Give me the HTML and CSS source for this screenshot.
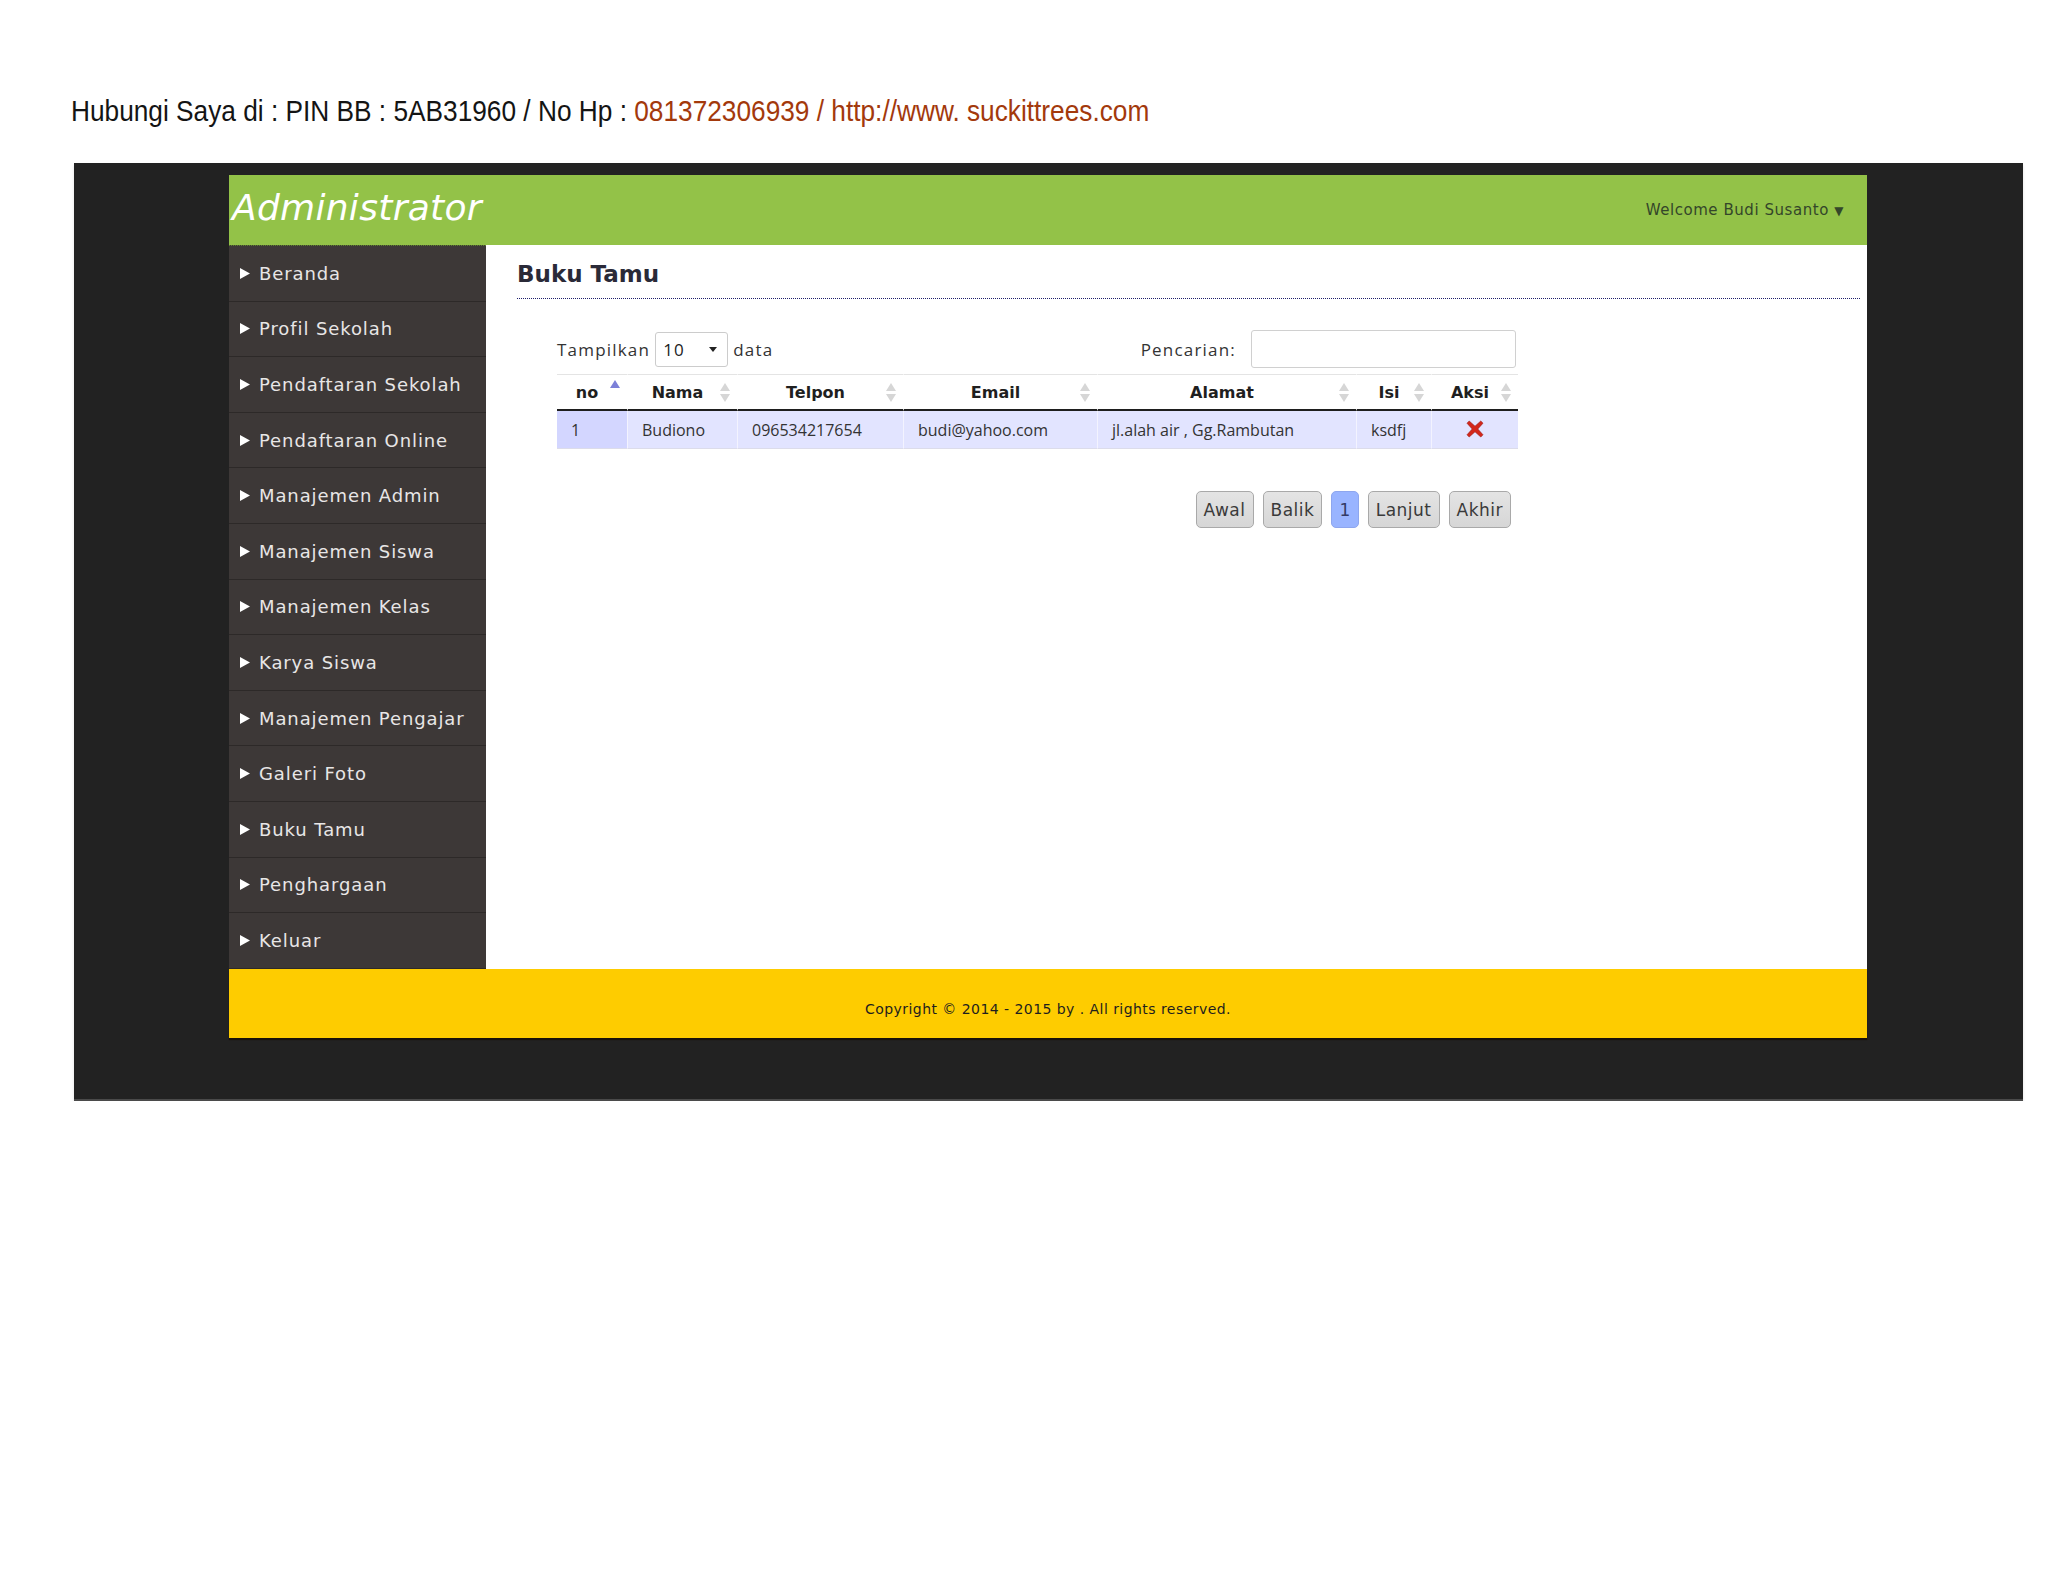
FILE: index.html
```html
<!DOCTYPE html>
<html>
<head>
<meta charset="utf-8">
<title>Administrator - Buku Tamu</title>
<link rel="stylesheet" href="styles.css">
</head>
<body>
<div class="contact"><span class="contact-text">Hubungi Saya di : PIN BB : 5AB31960 / No Hp : <span class="hl">081372306939 / http://www. suckittrees.com</span></span></div>
<div class="stage">
  <div class="app">
    <header class="topbar">
      <div class="brand">Administrator</div>
      <div class="welcome">Welcome Budi Susanto <span class="caret">▼</span></div>
    </header>
    <div class="main">
      <nav class="sidebar">
        <a class="nav-item"><svg class="tri" viewBox="0 0 10 11"><polygon points="0,0 10,5.5 0,11"/></svg>Beranda</a>
        <a class="nav-item"><svg class="tri" viewBox="0 0 10 11"><polygon points="0,0 10,5.5 0,11"/></svg>Profil Sekolah</a>
        <a class="nav-item"><svg class="tri" viewBox="0 0 10 11"><polygon points="0,0 10,5.5 0,11"/></svg>Pendaftaran Sekolah</a>
        <a class="nav-item"><svg class="tri" viewBox="0 0 10 11"><polygon points="0,0 10,5.5 0,11"/></svg>Pendaftaran Online</a>
        <a class="nav-item"><svg class="tri" viewBox="0 0 10 11"><polygon points="0,0 10,5.5 0,11"/></svg>Manajemen Admin</a>
        <a class="nav-item"><svg class="tri" viewBox="0 0 10 11"><polygon points="0,0 10,5.5 0,11"/></svg>Manajemen Siswa</a>
        <a class="nav-item"><svg class="tri" viewBox="0 0 10 11"><polygon points="0,0 10,5.5 0,11"/></svg>Manajemen Kelas</a>
        <a class="nav-item"><svg class="tri" viewBox="0 0 10 11"><polygon points="0,0 10,5.5 0,11"/></svg>Karya Siswa</a>
        <a class="nav-item"><svg class="tri" viewBox="0 0 10 11"><polygon points="0,0 10,5.5 0,11"/></svg>Manajemen Pengajar</a>
        <a class="nav-item"><svg class="tri" viewBox="0 0 10 11"><polygon points="0,0 10,5.5 0,11"/></svg>Galeri Foto</a>
        <a class="nav-item"><svg class="tri" viewBox="0 0 10 11"><polygon points="0,0 10,5.5 0,11"/></svg>Buku Tamu</a>
        <a class="nav-item"><svg class="tri" viewBox="0 0 10 11"><polygon points="0,0 10,5.5 0,11"/></svg>Penghargaan</a>
        <a class="nav-item"><svg class="tri" viewBox="0 0 10 11"><polygon points="0,0 10,5.5 0,11"/></svg>Keluar</a>
      </nav>
      <section class="content">
        <h1 class="page-title">Buku Tamu</h1>
        <div class="dt">
          <div class="dt-toolbar">
            <label class="dt-length">Tampilkan
              <span class="select"><span>10</span><svg class="sel-caret" viewBox="0 0 8 5"><polygon points="0,0 8,0 4,5"/></svg></span>
              data</label>
            <label class="dt-search">Pencarian: <span class="search-box"></span></label>
          </div>
          <table class="grid">
            <colgroup>
              <col class="c-no">
              <col class="c-nama">
              <col class="c-telp">
              <col class="c-email">
              <col class="c-alamat">
              <col class="c-isi">
              <col class="c-aksi">
            </colgroup>
            <thead>
              <tr>
                <th>no<svg class="sort sort-asc" viewBox="0 0 10 20"><polygon class="asc" points="0,8 5,0 10,8"/></svg></th>
                <th>Nama<svg class="sort" viewBox="0 0 10 20"><polygon points="0,8 5,0 10,8"/><polygon points="0,11 10,11 5,19"/></svg></th>
                <th>Telpon<svg class="sort" viewBox="0 0 10 20"><polygon points="0,8 5,0 10,8"/><polygon points="0,11 10,11 5,19"/></svg></th>
                <th>Email<svg class="sort" viewBox="0 0 10 20"><polygon points="0,8 5,0 10,8"/><polygon points="0,11 10,11 5,19"/></svg></th>
                <th>Alamat<svg class="sort" viewBox="0 0 10 20"><polygon points="0,8 5,0 10,8"/><polygon points="0,11 10,11 5,19"/></svg></th>
                <th>Isi<svg class="sort" viewBox="0 0 10 20"><polygon points="0,8 5,0 10,8"/><polygon points="0,11 10,11 5,19"/></svg></th>
                <th>Aksi<svg class="sort" viewBox="0 0 10 20"><polygon points="0,8 5,0 10,8"/><polygon points="0,11 10,11 5,19"/></svg></th>
              </tr>
            </thead>
            <tbody>
              <tr>
                <td class="sorted">1</td>
                <td>Budiono</td>
                <td>096534217654</td>
                <td>budi@yahoo.com</td>
                <td>jl.alah air , Gg.Rambutan</td>
                <td>ksdfj</td>
                <td class="act"><svg class="del" viewBox="0 0 18 18"><path d="M3.2 1 L9 6.2 L14.8 1 L17 3.2 L11.8 9 L17 14.8 L14.8 17 L9 11.8 L3.2 17 L1 14.8 L6.2 9 L1 3.2 Z"/></svg></td>
              </tr>
            </tbody>
          </table>
          <div class="pager">
            <a class="pbtn">Awal</a>
            <a class="pbtn">Balik</a>
            <a class="pbtn current">1</a>
            <a class="pbtn">Lanjut</a>
            <a class="pbtn">Akhir</a>
          </div>
        </div>
      </section>
    </div>
    <footer class="footer">Copyright © 2014 - 2015 by . All rights reserved.</footer>
  </div>
</div>
</body>
</html>
```
FILE: styles.css
```css
html, body {
  margin: 0;
  padding: 0;
  background: #ffffff;
}

body {
  font-family: "DejaVu Sans", sans-serif;
}

.contact {
  padding: 91px 0 0 71px;
  height: 40px;
  font-family: "Liberation Sans", Arial, sans-serif;
  font-size: 30px;
  line-height: 40px;
  color: #141414;
  white-space: nowrap;
}

.contact-text {
  display: inline-block;
  transform: scaleX(0.875);
  transform-origin: left center;
}

.contact .hl {
  color: #a3390c;
}

.stage {
  margin: 32px 0 0 74px;
  width: 1949px;
  height: 938px;
  box-sizing: border-box;
  background: #222222;
  padding: 12px 0 0 155px;
  border-bottom: 2px solid #4a4a4a;
  box-shadow: 0 2px 3px rgba(0, 0, 0, 0.12);
}

.app {
  width: 1638px;
}

.topbar {
  height: 70px;
  background: #93c248;
  display: flex;
  align-items: center;
  justify-content: space-between;
}

.brand {
  padding: 0 0 6px 3px;
  font-family: "DejaVu Sans", sans-serif;
  font-style: italic;
  font-size: 36px;
  color: #ffffff;
  letter-spacing: 0.3px;
}

.welcome {
  padding: 0 23px 0 0;
  font-family: "DejaVu Sans", sans-serif;
  font-size: 15px;
  letter-spacing: 0.55px;
  color: #34462a;
}

.welcome .caret {
  font-size: 12px;
}

.main {
  display: flex;
  align-items: stretch;
}

.sidebar {
  width: 257px;
  flex: none;
  background: #3d3837;
  border-top: 1px dotted #5f7f30;
  display: flex;
  flex-direction: column;
}

.nav-item {
  height: 54.6px;
  box-sizing: content-box;
  border-bottom: 1px solid #2d2928;
  display: flex;
  align-items: center;
  padding-left: 11px;
  font-family: "DejaVu Sans", sans-serif;
  font-size: 18px;
  letter-spacing: 0.9px;
  color: #e8e6e6;
  white-space: nowrap;
}

.nav-item .tri {
  width: 10px;
  height: 11px;
  fill: #ffffff;
  margin-right: 9px;
  flex: none;
}

.content {
  flex: 1;
  background: #ffffff;
  padding: 0 7px 0 31px;
}

.page-title {
  margin: 0;
  padding: 12px 0 7px 0;
  line-height: 34px;
  font-family: "DejaVu Sans", sans-serif;
  font-weight: bold;
  font-size: 23px;
  color: #2a2a38;
  border-bottom: 1px dotted #1e1e6a;
}

.dt {
  margin-left: 40px;
  width: 961px;
}

.dt-toolbar {
  margin-top: 31px;
  height: 38px;
  display: flex;
  align-items: center;
  justify-content: space-between;
  font-family: "Open Sans", sans-serif;
  font-size: 17px;
  letter-spacing: 1.2px;
  color: #333333;
}

.dt-length {
  display: flex;
  align-items: center;
  gap: 5px;
}

.select {
  width: 73px;
  height: 35px;
  box-sizing: border-box;
  border: 1px solid #cccccc;
  border-radius: 3px;
  background: #ffffff;
  display: flex;
  align-items: center;
  justify-content: space-between;
  padding: 0 10px 0 7px;
  color: #222222;
}

.sel-caret {
  width: 8px;
  height: 5px;
  fill: #222222;
}

.dt-search {
  display: flex;
  align-items: center;
  gap: 15px;
  margin-right: 2px;
}

.search-box {
  width: 265px;
  height: 38px;
  box-sizing: border-box;
  border: 1px solid #d0d0d0;
  border-radius: 3px;
  background: #ffffff;
}

.grid {
  margin-top: 6px;
  width: 961px;
  border-collapse: separate;
  border-spacing: 0;
  table-layout: fixed;
}

.c-no { width: 70px; }
.c-nama { width: 110px; }
.c-telp { width: 166px; }
.c-email { width: 194px; }
.c-alamat { width: 259px; }
.c-isi { width: 75px; }
.c-aksi { width: 87px; }

.grid th {
  position: relative;
  height: 34px;
  padding: 0 25px 0 15px;
  border-top: 1px solid #e4e4e4;
  border-bottom: 2px solid #1e1e1e;
  border-left: 1px solid #ffffff;
  background: #ffffff;
  font-family: "DejaVu Sans", sans-serif;
  font-weight: bold;
  font-size: 16px;
  color: #1f1f1f;
  text-align: center;
  white-space: nowrap;
}

.grid th:first-child {
  border-left: none;
}

.grid th .sort {
  position: absolute;
  right: 7px;
  top: 8px;
  width: 10px;
  height: 20px;
  fill: #d6d6d6;
}

.grid th .sort .asc {
  fill: #7c80d8;
}

.grid th .sort-asc {
  top: 5px;
}

.grid td {
  height: 37px;
  padding: 0 0 0 14px;
  background: #e2e4ff;
  border-left: 1px solid #f3f3ff;
  border-bottom: 1px solid #dcdcea;
  font-family: "Open Sans", sans-serif;
  font-size: 16px;
  color: #333333;
  white-space: nowrap;
  overflow: hidden;
}

.grid td:first-child {
  border-left: none;
}

.grid td.sorted {
  background: #d3d6ff;
}

.grid td.act {
  padding: 0;
  text-align: center;
}

.del {
  width: 18px;
  height: 18px;
  fill: #d3271b;
  stroke: #9b1710;
  stroke-width: 0.6;
  vertical-align: middle;
  margin-top: -4px;
}

.pager {
  margin-top: 42px;
  padding-right: 7px;
  display: flex;
  justify-content: flex-end;
  gap: 9px;
}

.pbtn {
  height: 37px;
  box-sizing: border-box;
  padding: 0 7px;
  border: 1px solid #a9a9a9;
  border-radius: 5px;
  background: linear-gradient(#e4e4e4, #d6d6d6);
  display: flex;
  align-items: center;
  font-family: "DejaVu Sans", sans-serif;
  font-size: 17px;
  letter-spacing: 0.5px;
  color: #3a3a3a;
}

.pbtn.current {
  background: #99b4ff;
  border-color: #8ea6ee;
  color: #333a66;
}

.footer {
  height: 69px;
  background: #fecc00;
  display: flex;
  align-items: center;
  justify-content: center;
  padding-top: 12px;
  box-sizing: border-box;
  font-family: "DejaVu Sans", sans-serif;
  font-size: 14px;
  letter-spacing: 0.45px;
  color: #1e1e1e;
  box-shadow: 0 2px 1px rgba(20, 10, 0, 0.7);
}
```
